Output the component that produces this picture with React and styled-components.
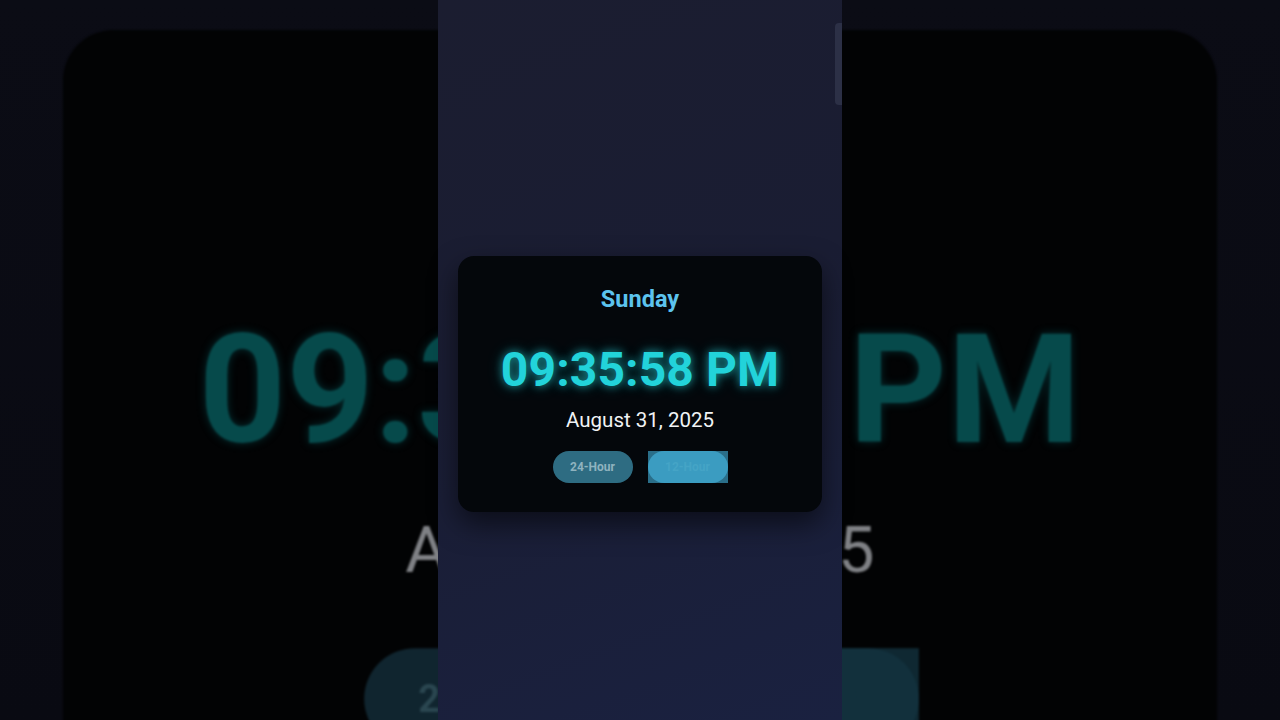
import React from "react";
import styled, { createGlobalStyle, css } from "styled-components";

//  //  //  GLOBAL   //  //  //

const GlobalStyle = createGlobalStyle`
  html, body {
    margin: 0;
    padding: 0;
    background: #0a0b13;
    font-family: Roboto, "Noto Sans", "Liberation Sans", sans-serif;
  }
`;

//  //  //  STYLED-COMPONENTS   //  //  //

const Stage = styled.main`
  position: relative;
  width: 1280px;
  height: 720px;
  overflow: hidden;
  background: linear-gradient(180deg, #0b0c15 0%, #090a12 100%);
`;

// enlarged, dimmed copy of the card that fills the frame behind the phone
const Backdrop = styled.div`
  padding: 30px 0 0 63px;
  filter: blur(1.2px);
`;

const Card = styled.section`
  box-sizing: border-box;
  width: 364px;
  height: 256px;
  border-radius: 16px;
  background: #04070b;
  display: flex;
  flex-direction: column;
  align-items: center;
  padding-top: 31px;
  box-shadow: 0 12px 28px rgba(0, 0, 0, 0.55);

  ${(p) =>
    p.$big &&
    css`
      transform-origin: top left;
      transform: scale(3.17);
      background: #020304;
      box-shadow: none;
    `}
`;

const Day = styled.h2`
  margin: 0;
  font-size: 23.5px;
  font-weight: 700;
  line-height: 24px;
  color: ${(p) => (p.$big ? "#1c3b4a" : "#5cc3ee")};
`;

const Time = styled.h1`
  margin: 35px 0 0;
  font-size: 48px;
  font-weight: 700;
  line-height: 48px;
  letter-spacing: 0.1px;
  color: ${(p) => (p.$big ? "#064a4b" : "#22d3da")};
  text-shadow: ${(p) =>
    p.$big
      ? "0 0 3px rgba(10, 110, 115, 0.4)"
      : "0 0 8px rgba(34, 211, 218, 0.65), 0 0 16px rgba(34, 211, 218, 0.3)"};
`;

const DateLine = styled.p`
  margin: 14px 0 0;
  font-size: 20.5px;
  line-height: 24px;
  color: ${(p) => (p.$big ? "#7f8185" : "#f1f3f5")};
`;

const Buttons = styled.div`
  display: flex;
  gap: 15px;
  margin-top: 19px;
`;

const Slot = styled.span`
  display: flex;
  background: ${(p) => (p.$active ? (p.$big ? "#0f2832" : "#2a6e89") : "transparent")};
`;

const Toggle = styled.button`
  width: 80px;
  height: 32px;
  border: 0;
  border-radius: 16px;
  font-family: inherit;
  font-size: 12px;
  font-weight: 700;
  padding: 0;
  cursor: pointer;
  background: ${(p) =>
    p.$big ? (p.$active ? "#12303c" : "#10252f") : p.$active ? "#3b9cc1" : "#2e6c82"};
  color: ${(p) =>
    p.$big ? (p.$active ? "#12303c" : "#2a4650") : p.$active ? "#45a4c6" : "#8fb3bf"};
`;

const Phone = styled.div`
  position: absolute;
  top: 0;
  left: 438px;
  width: 404px;
  height: 720px;
  display: flex;
  align-items: center;
  justify-content: center;
  background: linear-gradient(160deg, #1b1d30 0%, #1a1d33 45%, #1a2140 100%);
`;

const ScrollThumb = styled.span`
  position: absolute;
  top: 23px;
  right: 0;
  width: 7px;
  height: 82px;
  border-radius: 4px 0 0 4px;
  background: #2c3046;
`;

const CardSlot = styled.div`
  margin-top: 48px;
`;

//  //  //  DATA   //  //  //

const clock = {
  day: "Sunday",
  time: "09:35:58 PM",
  date: "August 31, 2025",
  modes: ["24-Hour", "12-Hour"],
  active: "12-Hour",
};

function ClockCard({ big }) {
  return (
    <Card $big={big}>
      <Day $big={big}>{clock.day}</Day>
      <Time $big={big}>{clock.time}</Time>
      <DateLine $big={big}>{clock.date}</DateLine>
      <Buttons>
        {clock.modes.map((m) => (
          <Slot key={m} $active={m === clock.active} $big={big}>
            <Toggle $active={m === clock.active} $big={big}>
              {m}
            </Toggle>
          </Slot>
        ))}
      </Buttons>
    </Card>
  );
}

//  //  //  FUNCTION    //  //  //

export default function App() {
  return (
    <>
      <GlobalStyle />
      <Stage>
        <Backdrop>
          <ClockCard big />
        </Backdrop>
        <Phone>
          <CardSlot>
            <ClockCard />
          </CardSlot>
          <ScrollThumb />
        </Phone>
      </Stage>
    </>
  );
}
